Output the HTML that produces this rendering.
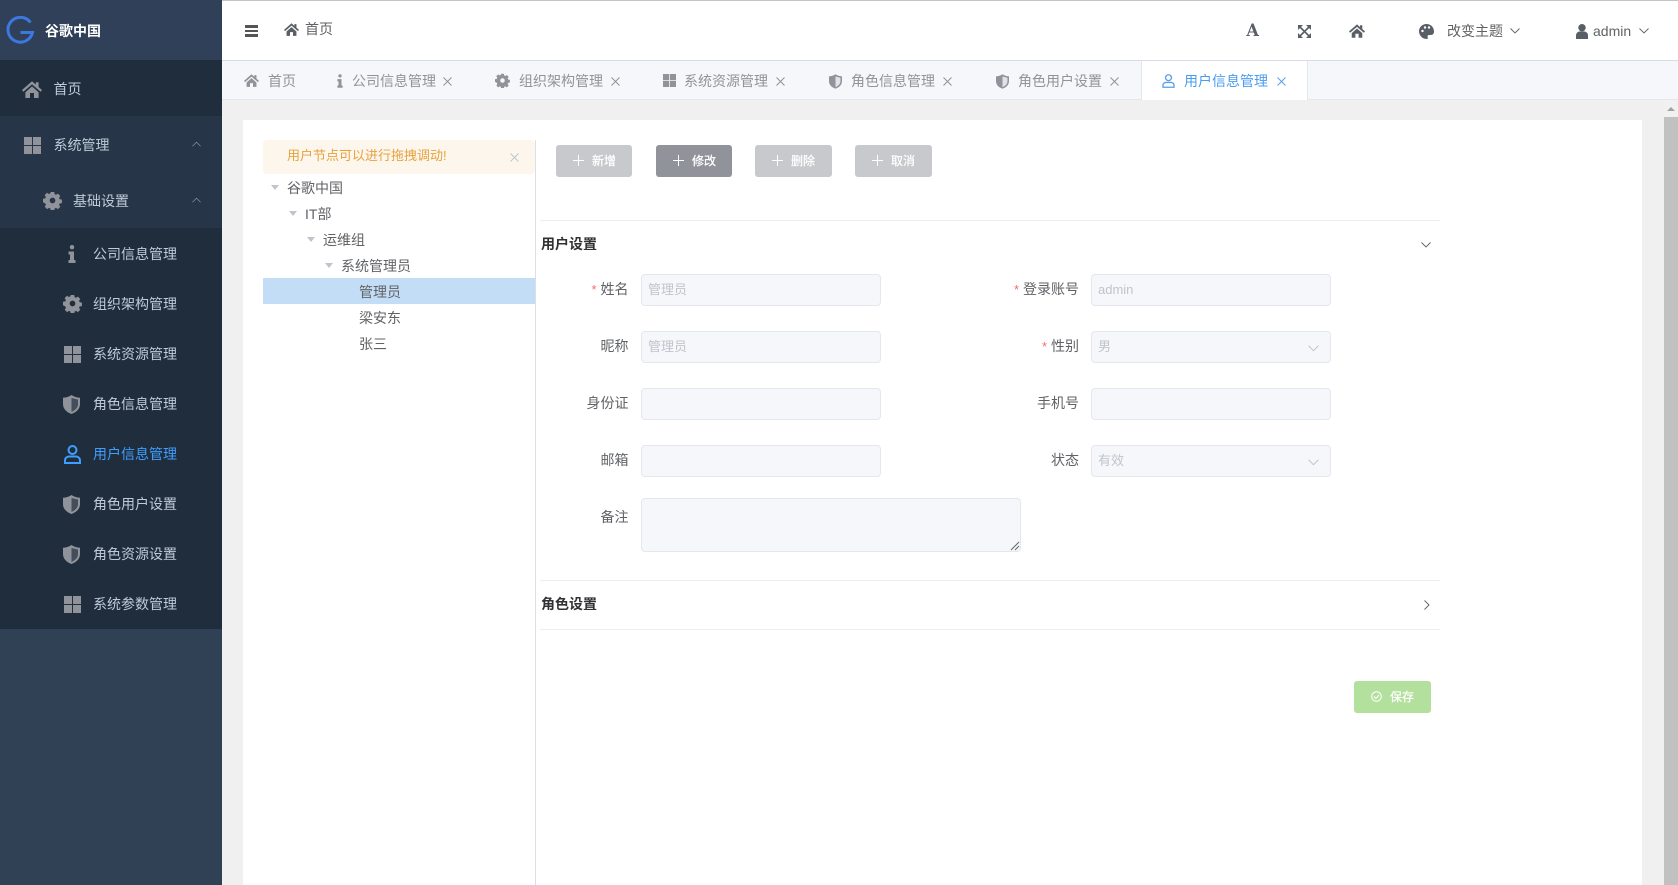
<!DOCTYPE html>
<html lang="zh"><head><meta charset="utf-8"><title>用户信息管理</title>
<style>
html,body{margin:0;padding:0;width:1678px;height:885px;overflow:hidden;background:#f0f0f0}
body{position:relative;font-family:"Liberation Sans","Noto Sans CJK SC",sans-serif;font-size:14px;color:#606266}
.a{position:absolute}
.t{position:absolute;white-space:nowrap;line-height:20px;height:20px}
svg{position:absolute;display:block}
.side{color:#bfcbd9}
.btn{position:absolute;top:145px;height:32px;border-radius:3px;background:#c8c9cc}
.btn span{position:absolute;left:36px;top:6px;line-height:20px;font-size:12px;color:#fff;-webkit-text-stroke:.25px #fff;white-space:nowrap}
.btn i{position:absolute;left:17px;top:15px;width:11px;height:1px;background:#fff}
.btn b{position:absolute;left:22px;top:10px;width:1px;height:11px;background:#fff}
.in{position:absolute;box-sizing:border-box;width:240px;height:32px;background:#f5f7fa;border:1px solid #e4e7ed;border-radius:4px;color:#c0c4cc;font-size:13px;line-height:30px;padding-left:6px}
.lb{position:absolute;width:110.500px;text-align:right;white-space:nowrap;line-height:20px;color:#606266}
.lb em{font-style:normal;color:#f56c6c;margin-right:4px;font-size:13px}
.tx{position:absolute;white-space:nowrap;line-height:20px;top:71px;color:#909399}
.x{top:77px;stroke:#909399}
.line{position:absolute;left:540px;width:900px;height:1px;background:#ebeef5}
.arr{position:absolute;border-left:4px solid transparent;border-right:4px solid transparent;border-top:5px solid #c0c4cc}
</style></head><body>
<svg width="0" height="0" style="position:absolute">
<defs>
<symbol id="home" viewBox="0 0 20 17"><path d="M10 .2 0 9l1.400 1.700L10 3.400l8.600 7.300L20 9l-3.400-3V1.300h-2.800v2.300z"/><path d="M3.400 11.200 10 5.400l6.600 5.800V17H12v-5H8v5H3.400z"/></symbol>
<symbol id="grid" viewBox="0 0 17 17"><path d="M0 0h8v8H0zM9 0h8v8H9zM0 9h8v8H0zM9 9h8v8H9z"/></symbol>
<symbol id="gear" viewBox="0 0 18 18"><path fill-rule="evenodd" d="M7.200 0h3.600l.5 2.400 1.400.6 2-1.300 2.500 2.500-1.300 2 .6 1.400 2.400.5v3.600l-2.400.5-.6 1.400 1.300 2-2.500 2.500-2-1.300-1.400.6-.5 2.400H7.200l-.5-2.400-1.400-.6-2 1.300-2.500-2.500 1.300-2-.6-1.400L-1 10.800V7.200l2.400-.5.6-1.400-1.300-2 2.500-2.500 2 1.300 1.400-.6zM9 6a3 3 0 1 0 0 6 3 3 0 0 0 0-6z" transform="translate(.9 .9) scale(.9)"/></symbol>
<symbol id="info" viewBox="0 0 8 18"><circle cx="4" cy="2.200" r="2.200"/><path d="M.5 6.500H6V15h1.500v3H.5v-3H2V9.500H.5z"/></symbol>
<symbol id="shield" viewBox="0 0 17 19"><path d="M8.500 0C10.500 1.500 14 2.600 17 2.800V9c0 5-3.600 8.100-8.500 10C3.600 17.100 0 14 0 9V2.800C3 2.600 6.500 1.500 8.500 0z"/></symbol>
<symbol id="chev" viewBox="0 0 10 6"><path d="M.5.500 5 5 9.500.500" fill="none" stroke-width=".9"/></symbol>
<symbol id="cl" viewBox="0 0 9 9"><path d="M.5.500l8 8M8.500.500l-8 8" fill="none" stroke-width="1"/></symbol>
</defs></svg>

<div class="a" style="left:0;top:0;width:1678px;height:1px;background:#c4c4c4"></div>

<!-- sidebar -->
<div class="a" style="left:0;top:0;width:222px;height:885px;background:#304156"></div>
<div class="a" style="left:0;top:2px;width:222px;height:58px;background:#2f4058"></div>
<svg style="left:5px;top:16px" width="30" height="29" viewBox="0 0 30 29"><path d="M25.500 6.500A12.400 12.400 0 1 0 27.500 16.500H15.500" fill="none" stroke="#3b78e0" stroke-width="3"/></svg>
<div class="t" style="left:45px;top:21px;color:#fff;font-weight:bold;font-size:14px">谷歌中国</div>

<div class="a" style="left:0;top:60px;width:222px;height:56px;background:#1f2d3d"></div>
<div class="a" style="left:0;top:116px;width:222px;height:112px;background:#263548"></div>
<div class="a" style="left:0;top:228px;width:222px;height:401px;background:#1f2d3d"></div>

<svg style="left:22px;top:81px;fill:#909399" width="20" height="17"><use href="#home"/></svg>
<div class="t side" style="left:53.500px;top:79px">首页</div>
<svg style="left:24px;top:137px;fill:#909399" width="17" height="17"><use href="#grid"/></svg>
<div class="t side" style="left:53.500px;top:135px">系统管理</div>
<svg style="left:192px;top:141px;stroke:#7d8a99;transform:rotate(180deg)" width="9" height="6"><use href="#chev"/></svg>
<svg style="left:43px;top:191px;fill:#909399" width="19" height="19"><use href="#gear"/></svg>
<div class="t side" style="left:73px;top:191px">基础设置</div>
<svg style="left:192px;top:197px;stroke:#7d8a99;transform:rotate(180deg)" width="9" height="6"><use href="#chev"/></svg>

<svg style="left:68px;top:245px;fill:#909399" width="8" height="18"><use href="#info"/></svg>
<div class="t side" style="left:93px;top:244px">公司信息管理</div>
<svg style="left:62.500px;top:294px;fill:#909399" width="19" height="19"><use href="#gear"/></svg>
<div class="t side" style="left:93px;top:294px">组织架构管理</div>
<svg style="left:64px;top:346px;fill:#909399" width="17" height="17"><use href="#grid"/></svg>
<div class="t side" style="left:93px;top:344px">系统资源管理</div>
<svg style="left:63px;top:395px;fill:#909399" width="17" height="19" viewBox="0 0 17 19"><use href="#shield"/><path d="M8.500 3 15 4.600V9c0 3.600-2.500 6-6.500 8z" fill="#434e5d"/></svg>
<div class="t side" style="left:93px;top:394px">角色信息管理</div>
<svg style="left:64px;top:445px" width="17" height="19" viewBox="0 0 17 19" fill="none" stroke="#409eff" stroke-width="2"><circle cx="8.500" cy="5" r="4"/><path d="M1 18v-2.500C1 13 3 11.500 5 11.500h7c2 0 4 1.500 4 4V18z"/></svg>
<div class="t" style="left:93px;top:444px;color:#409eff">用户信息管理</div>
<svg style="left:63px;top:495px;fill:#909399" width="17" height="19" viewBox="0 0 17 19"><use href="#shield"/><path d="M8.500 3 15 4.600V9c0 3.600-2.500 6-6.500 8z" fill="#434e5d"/></svg>
<div class="t side" style="left:93px;top:494px">角色用户设置</div>
<svg style="left:63px;top:545px;fill:#909399" width="17" height="19" viewBox="0 0 17 19"><use href="#shield"/><path d="M8.500 3 15 4.600V9c0 3.600-2.500 6-6.500 8z" fill="#434e5d"/></svg>
<div class="t side" style="left:93px;top:544px">角色资源设置</div>
<svg style="left:64px;top:596px;fill:#909399" width="17" height="17"><use href="#grid"/></svg>
<div class="t side" style="left:93px;top:594px">系统参数管理</div>

<!-- header -->
<div class="a" style="left:222px;top:1px;width:1456px;height:59px;background:#fff"></div>
<div class="a" style="left:222px;top:60px;width:1456px;height:1px;background:#d8dce5"></div>
<div class="a" style="left:245px;top:25px;width:13px;height:2.500px;background:#555"></div>
<div class="a" style="left:245px;top:29.500px;width:13px;height:2.500px;background:#555"></div>
<div class="a" style="left:245px;top:34px;width:13px;height:2.500px;background:#555"></div>
<svg style="left:284px;top:23px;fill:#5a5e66" width="15" height="13"><use href="#home"/></svg>
<div class="t" style="left:305px;top:19px;color:#606266">首页</div>

<div class="t" style="left:1246px;top:21px;font:bold 17px/20px 'DejaVu Serif',serif;color:#5a5e66;transform:scaleX(.95)">A</div>
<svg style="left:1298px;top:25px" width="13" height="13" viewBox="0 0 13 13"><path fill="#5a5e66" d="M0 0h5L3.600 1.400 0 5zM13 0H8l1.400 1.400L13 5zM0 13h5l-1.400-1.400L0 8zM13 13H8l1.400-1.400L13 8z"/><path d="M1.500 1.500l10 10M11.500 1.500l-10 10" stroke="#5a5e66" stroke-width="1.600"/></svg>
<svg style="left:1349px;top:24px;fill:#5a5e66" width="16" height="14"><use href="#home"/></svg>
<svg style="left:1418.500px;top:24px" width="15" height="15" viewBox="0 0 15 15"><path fill="#5a5e66" d="M7.500 0C3.300 0 0 3.200 0 7.300S3.300 15 7.500 15c1.300 0 1.600-.9 1.200-1.800-.5-1 .1-2.200 1.500-2.200H12c1.900 0 3-1.500 3-3.500C15 3.200 11.700 0 7.500 0z"/><circle cx="3.500" cy="7" r="1.200" fill="#fff"/><circle cx="6" cy="3.500" r="1.200" fill="#fff"/><circle cx="10" cy="3.500" r="1.200" fill="#fff"/></svg>
<div class="t" style="left:1447px;top:21px;color:#606266">改变主题</div>
<svg style="left:1510px;top:28px;stroke:#606266" width="10" height="6"><use href="#chev"/></svg>
<svg style="left:1576px;top:24px" width="12" height="15" viewBox="0 0 12 15" fill="#5a5e66"><circle cx="6" cy="3.700" r="3.700"/><path d="M0 15v-3.500C0 9 2 7.500 3.500 7.500h5C10 7.500 12 9 12 11.500V15z"/></svg>
<div class="t" style="left:1593px;top:21px;color:#606266;font-size:14px">admin</div>
<svg style="left:1639px;top:28px;stroke:#606266" width="10" height="6"><use href="#chev"/></svg>

<!-- tabs -->
<div class="a" style="left:222px;top:61px;width:1456px;height:38px;background:#f5f7fa"></div>
<div class="a" style="left:222px;top:99px;width:1456px;height:1px;background:#e4e7ed"></div>
<svg style="left:244px;top:74px;fill:#909399" width="15" height="13"><use href="#home"/></svg>
<div class="tx" style="left:268px">首页</div>
<svg style="left:337px;top:74px;fill:#909399" width="6" height="14"><use href="#info"/></svg>
<div class="tx" style="left:352px">公司信息管理</div><svg class="x" style="left:443px" width="9" height="9"><use href="#cl"/></svg>
<svg style="left:495px;top:73px;fill:#909399" width="15" height="15"><use href="#gear"/></svg>
<div class="tx" style="left:519px">组织架构管理</div><svg class="x" style="left:611px" width="9" height="9"><use href="#cl"/></svg>
<svg style="left:663px;top:74px;fill:#909399" width="13" height="13"><use href="#grid"/></svg>
<div class="tx" style="left:684px">系统资源管理</div><svg class="x" style="left:776px" width="9" height="9"><use href="#cl"/></svg>
<svg style="left:829px;top:74px;fill:#909399" width="13" height="15" viewBox="0 0 17 19"><use href="#shield"/><path d="M8.500 3 15 4.600V9c0 3.600-2.500 6-6.500 8z" fill="#dfe2e8"/></svg>
<div class="tx" style="left:851px">角色信息管理</div><svg class="x" style="left:943px" width="9" height="9"><use href="#cl"/></svg>
<svg style="left:996px;top:74px;fill:#909399" width="13" height="15" viewBox="0 0 17 19"><use href="#shield"/><path d="M8.500 3 15 4.600V9c0 3.600-2.500 6-6.500 8z" fill="#dfe2e8"/></svg>
<div class="tx" style="left:1018px">角色用户设置</div><svg class="x" style="left:1110px" width="9" height="9"><use href="#cl"/></svg>
<div class="a" style="left:1141px;top:61px;width:165px;height:39px;background:#fff;border-left:1px solid #e4e7ed;border-right:1px solid #e4e7ed"></div>
<svg style="left:1162px;top:74px" width="13" height="14" viewBox="0 0 17 19" fill="none" stroke="#5a9fe8" stroke-width="1.800"><circle cx="8.500" cy="5" r="4"/><path d="M1 18v-2.500C1 13 3 11.500 5 11.500h7c2 0 4 1.500 4 4V18z"/></svg>
<div class="tx" style="left:1184px;color:#4a9cf0">用户信息管理</div><svg class="x" style="left:1276.500px;stroke:#5a9fe8" width="9" height="9"><use href="#cl"/></svg>

<!-- scrollbar -->
<div class="a" style="left:1664px;top:100px;width:14px;height:785px;background:#f1f1f1"></div>
<div class="a" style="left:1664px;top:117px;width:14px;height:768px;background:#c1c1c1"></div>
<div class="a" style="left:1667px;top:107px;width:0;height:0;border-left:4px solid transparent;border-right:4px solid transparent;border-bottom:4px solid #a3a3a3"></div>

<!-- card -->
<div class="a" style="left:243px;top:120px;width:1399px;height:765px;background:#fff"></div>

<!-- tree -->
<div class="a" style="left:263px;top:140px;width:272px;height:34px;background:#fdf6ec;border-radius:4px"></div>
<div class="t" style="left:287px;top:146px;color:#e6a23c;font-size:13px">用户节点可以进行拖拽调动!</div>
<svg style="left:509.500px;top:153px;stroke:#c0c4cc" width="9" height="9"><use href="#cl"/></svg>
<div class="a" style="left:535px;top:140px;width:1px;height:745px;background:#dcdfe6"></div>
<div class="a" style="left:263px;top:278px;width:272px;height:26px;background:#c3ddf7"></div>
<div class="t" style="left:287px;top:178px">谷歌中国</div>
<div class="t" style="left:305px;top:204px">IT部</div>
<div class="t" style="left:323px;top:230px">运维组</div>
<div class="t" style="left:341px;top:256px">系统管理员</div>
<div class="t" style="left:359px;top:282px">管理员</div>
<div class="t" style="left:359px;top:308px">梁安东</div>
<div class="t" style="left:359px;top:334px">张三</div>
<div class="arr" style="left:271px;top:185px"></div>
<div class="arr" style="left:289px;top:211px"></div>
<div class="arr" style="left:307px;top:237px"></div>
<div class="arr" style="left:325px;top:263px"></div>

<!-- buttons -->
<div class="btn" style="left:556px;width:76px"><i></i><b></b><span>新增</span></div>
<div class="btn" style="left:656px;width:76px;background:#909399"><i></i><b></b><span>修改</span></div>
<div class="btn" style="left:755px;width:77px"><i></i><b></b><span>删除</span></div>
<div class="btn" style="left:855px;width:77px"><i></i><b></b><span>取消</span></div>

<!-- collapse -->
<div class="line" style="top:220px"></div>
<div class="t" style="left:541px;top:234px;font-weight:bold;color:#303133">用户设置</div>
<svg style="left:1421px;top:242px;stroke:#606266" width="10" height="6"><use href="#chev"/></svg>

<div class="lb" style="left:518px;top:279px"><em>*</em>姓名</div>
<div class="in" style="left:641px;top:274px">管理员</div>
<div class="lb" style="left:518px;top:336px">昵称</div>
<div class="in" style="left:641px;top:331px">管理员</div>
<div class="lb" style="left:518px;top:393px">身份证</div>
<div class="in" style="left:641px;top:388px"></div>
<div class="lb" style="left:518px;top:450px">邮箱</div>
<div class="in" style="left:641px;top:445px"></div>
<div class="lb" style="left:518px;top:507px">备注</div>
<div class="in" style="left:641px;top:498px;width:380px;height:54px"></div>
<svg style="left:1010px;top:541px" width="10" height="10" viewBox="0 0 10 10" stroke="#666" fill="none"><path d="M1 9 9 1M5 9 9 5"/></svg>

<div class="lb" style="left:968.500px;top:279px"><em>*</em>登录账号</div>
<div class="in" style="left:1091px;top:274px">admin</div>
<div class="lb" style="left:968.500px;top:336px"><em>*</em>性别</div>
<div class="in" style="left:1091px;top:331px">男</div>
<svg style="left:1308px;top:345px;stroke:#c0c4cc" width="11" height="7"><use href="#chev"/></svg>
<div class="lb" style="left:968.500px;top:393px">手机号</div>
<div class="in" style="left:1091px;top:388px"></div>
<div class="lb" style="left:968.500px;top:450px">状态</div>
<div class="in" style="left:1091px;top:445px">有效</div>
<svg style="left:1308px;top:459px;stroke:#c0c4cc" width="11" height="7"><use href="#chev"/></svg>

<div class="line" style="top:580px"></div>
<div class="t" style="left:541px;top:594px;font-weight:bold;color:#303133">角色设置</div>
<svg style="left:1421.500px;top:602px;stroke:#606266;transform:rotate(-90deg)" width="10" height="6"><use href="#chev"/></svg>
<div class="line" style="top:629px"></div>

<!-- save -->
<div class="a" style="left:1354px;top:681px;width:77px;height:32px;background:#b3e19d;border-radius:3px"></div>
<svg style="left:1371px;top:691px" width="11" height="11" viewBox="0 0 11 11" fill="none" stroke="#fff"><circle cx="5.500" cy="5.500" r="4.800"/><path d="M3 5.500 5 7.500 8 4"/></svg>
<div class="t" style="left:1390px;top:687px;color:#fff;font-size:12px;-webkit-text-stroke:.25px #fff">保存</div>
</body></html>
